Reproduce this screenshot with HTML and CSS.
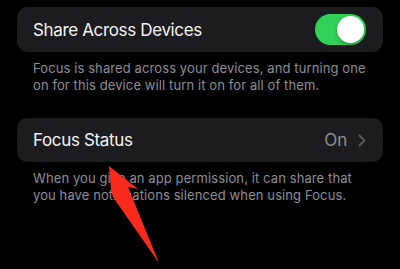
FILE: index.html
```html
<!DOCTYPE html>
<html lang="en">
<head>
  <meta charset="UTF-8" />
  <meta name="viewport" content="width=device-width, initial-scale=1.0"/>
  <title>Focus</title>
  <link rel="stylesheet" href="styles.css">
</head>
<body>
  <div class="page">
    <div class="cell">
      <span class="label">Share Across Devices</span>
      <span class="toggle on"><span class="knob"></span></span>
    </div>
    <div class="footer">Focus is shared across your devices, and turning one on for this device will turn it on for all of them.</div>

    <div class="cell second">
      <span class="label">Focus Status</span>
      <span class="value">On</span>
      <svg class="chevron" width="8" height="13" viewBox="0 0 8 13">
        <path d="M1.5 1.5 L6.5 6.5 L1.5 11.5" fill="none" stroke="#5b5b60" stroke-width="1.8" stroke-linecap="round" stroke-linejoin="round"/>
      </svg>
    </div>
    <div class="footer">When you give an app permission, it can share that you have notifications silenced when using Focus.</div>
  </div>

  <!-- annotation arrow -->
  <svg class="arrow" width="400" height="269" viewBox="0 0 400 269">
    <polygon points="109,166 138,189 128,187 159,263 113,197 111,190" fill="#fa2a1d"/>
  </svg>
</body>
</html>
```

FILE: styles.css
```css
body {
  margin: 0; background: #000; color: #fff;
  font-family: Inter, "Liberation Sans", sans-serif;
  width: 400px; height: 269px; overflow: hidden; position: relative;
}
.page { padding: 7px 17px 0 17px; }

.cell {
  height: 45px; background: #1c1c1e; border-radius: 11px;
  display: flex; align-items: center; padding: 0 17px 0 16px;
}
.cell.second { margin-top: 24px; height: 44px; }
.label { flex: 1; font-size: 17px; letter-spacing: -0.35px; color: #f4f4f5; }
.value { font-size: 17px; color: #8e8e93; margin-right: 11px; letter-spacing: -0.2px; }
.chevron { display: block; }

.toggle {
  width: 51px; height: 31px; border-radius: 16px; background: #39393d;
  position: relative; display: block;
}
.toggle.on { background: #30d158; }
.toggle .knob {
  position: absolute; top: 2px; left: 2px; width: 27px; height: 27px;
  border-radius: 50%; background: #fff; box-shadow: 0 2px 4px rgba(0,0,0,0.25);
}
.toggle.on .knob { left: 22px; }

.footer {
  padding: 8px 16px 0 16px; font-size: 13px; line-height: 17px;
  color: #8d8d93; letter-spacing: 0.1px;
}

.arrow { position: absolute; left: 0; top: 0; }
```
